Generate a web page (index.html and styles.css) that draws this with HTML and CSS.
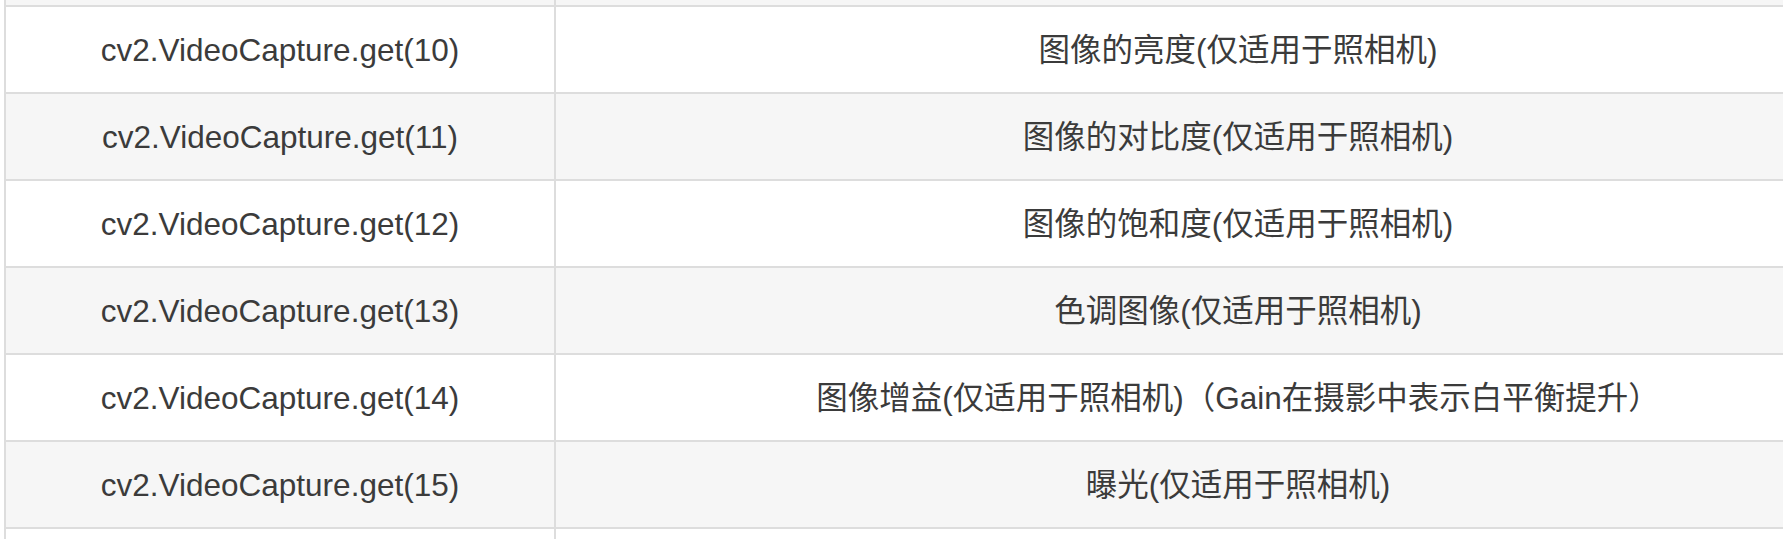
FILE: index.html
```html
<!DOCTYPE html>
<html lang="zh-CN">
<head>
<meta charset="utf-8">
<title>VideoCapture</title>
<link rel="stylesheet" href="styles.css">
</head>
<body>
<div class="frame">
<table class="props">
  <tbody>
    <tr class="alt edge"><td class="fn"></td><td class="desc"></td></tr>
    <tr><td class="fn">cv2.VideoCapture.get(10)</td><td class="desc">图像的亮度(仅适用于照相机)</td></tr>
    <tr class="alt"><td class="fn">cv2.VideoCapture.get(11)</td><td class="desc">图像的对比度(仅适用于照相机)</td></tr>
    <tr><td class="fn">cv2.VideoCapture.get(12)</td><td class="desc">图像的饱和度(仅适用于照相机)</td></tr>
    <tr class="alt"><td class="fn">cv2.VideoCapture.get(13)</td><td class="desc">色调图像(仅适用于照相机)</td></tr>
    <tr><td class="fn">cv2.VideoCapture.get(14)</td><td class="desc">图像增益(仅适用于照相机)（Gain在摄影中表示白平衡提升）</td></tr>
    <tr class="alt"><td class="fn">cv2.VideoCapture.get(15)</td><td class="desc">曝光(仅适用于照相机)</td></tr>
    <tr class="edge"><td class="fn"></td><td class="desc"></td></tr>
  </tbody>
</table>
</div>
</body>
</html>
```

FILE: styles.css
```css
html, body {
  margin: 0;
  padding: 0;
  background: #ffffff;
}

.frame {
  width: 100vw;
  height: 100vh;
  overflow: hidden;
}

.props {
  border-collapse: separate;
  border-spacing: 0;
  margin: -82px 0 0 4px;
  width: 1916px;
  table-layout: fixed;
  font-family: "Liberation Sans", "Noto Sans CJK SC", Arial, sans-serif;
  font-size: 31.5px;
  color: #3b3b3b;
}

.props td {
  height: 85px;
  padding: 0;
  text-align: center;
  vertical-align: middle;
  border-top: 2px solid #dddddd;
  border-left: 2px solid #dddddd;
  line-height: 40px;
  white-space: nowrap;
  background: #ffffff;
}

.props td.fn {
  width: 548px;
}

.props tr.alt td {
  background: #f6f6f6;
}
```
